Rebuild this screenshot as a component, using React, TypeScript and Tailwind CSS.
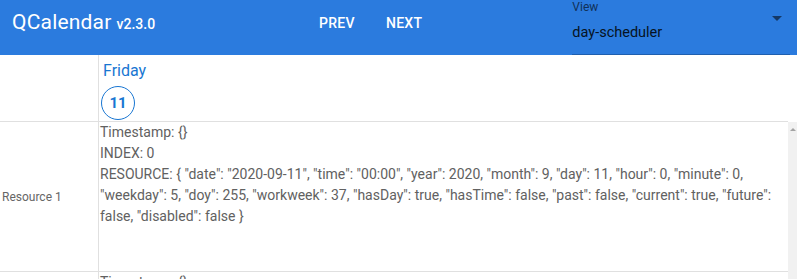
import React from 'react';

const resource = {
  date: '2020-09-11',
  time: '00:00',
  year: 2020,
  month: 9,
  day: 11,
  hour: 0,
  minute: 0,
  weekday: 5,
  doy: 255,
  workweek: 37,
  hasDay: true,
  hasTime: false,
  past: false,
  current: true,
  future: false,
  disabled: false,
};

// pretty-print like the demo: { "key": value, ... }
const resourceText =
  '{ ' +
  Object.entries(resource)
    .map(([k, v]) => `"${k}": ${JSON.stringify(v)}`)
    .join(', ') +
  ' }';

const rows = ['Resource 1', 'Resource 2'];

const App: React.FC = () => {
  return (
    <div className="w-[797px] h-[279px] overflow-hidden bg-white font-['Roboto',sans-serif]">
      {/* Toolbar */}
      <header className="h-[55px] bg-[#2b7bde] flex items-start text-white">
        <div className="w-[319px] pl-3 pt-[6px] flex items-baseline">
          <span className="text-[21px] leading-[32px] tracking-[0.2px]">QCalendar</span>
          <span className="ml-[5px] text-[14px] font-medium">v2.3.0</span>
        </div>
        <button className="mt-[13px] text-[14px] leading-[20px] font-medium tracking-[0.3px]">PREV</button>
        <button className="ml-[31px] mt-[13px] text-[14px] leading-[20px] font-medium tracking-[0.3px]">NEXT</button>

        {/* Select */}
        <div className="ml-[150px] w-[218px] h-[55px] border-b border-[#1f5fae] relative">
          <div className="text-[12px] leading-[14px] text-[#113159]">View</div>
          <div className="mt-[10px] text-[14.5px] leading-[18px] text-[#061323]">day-scheduler</div>
          <div className="absolute right-[8px] top-[16px] w-0 h-0 border-l-[5px] border-r-[5px] border-t-[5px] border-l-transparent border-r-transparent border-t-[#143866]" />
        </div>
      </header>

      {/* Calendar head */}
      <div className="flex h-[67px] mr-[9px] border-b border-[#e0e0e0]">
        <div className="w-[99px] border-r border-[#e0e0e0]" />
        <div className="pl-[2px] pt-[4px] flex flex-col items-start">
          <div className="text-[16px] leading-[24px] text-[#1976d2] pl-[2px]">Friday</div>
          <div className="mt-[3px] w-[34px] h-[34px] rounded-full border border-[#1976d2] flex items-center justify-center text-[15px] font-bold text-[#1976d2]">
            11
          </div>
        </div>
      </div>

      {/* Calendar body */}
      <div className="flex">
        <div className="flex-1">
          {rows.map((name) => (
            <div key={name} className="flex h-[150px] border-b border-[#e0e0e0]">
              <div className="w-[99px] shrink-0 border-r border-[#e0e0e0] flex items-center pl-[2px] text-[12px] text-[#666]">
                {name}
              </div>
              <div className="flex-1 pl-[1px] text-[14px] leading-[21px] text-[#616161]">
                <div>Timestamp: {'{}'}</div>
                <div>INDEX: 0</div>
                <div>RESOURCE: {resourceText}</div>
              </div>
            </div>
          ))}
        </div>
        {/* scrollbar track */}
        <div className="w-[9px] h-[160px] bg-[#f1f1f1] flex justify-center pt-[6px]">
          <div className="w-0 h-0 border-l-[3px] border-r-[3px] border-b-[3px] border-l-transparent border-r-transparent border-b-[#a3a3a3]" />
        </div>
      </div>
    </div>
  );
};

export default App;
